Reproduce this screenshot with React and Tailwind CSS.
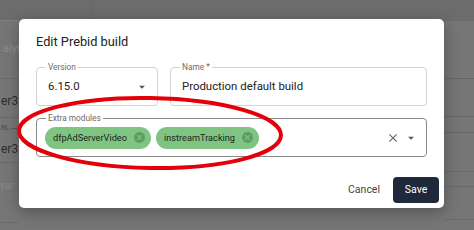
import React from 'react';

const ArrowDrop = ({ className }) => (
  <svg viewBox="0 0 24 24" className={className} fill="currentColor">
    <path d="M7 10l5 5 5-5z" />
  </svg>
);

const ChipDelete = () => (
  <svg viewBox="0 0 24 24" className="w-[13px] h-[13px] text-[#5f9b62]" fill="currentColor">
    <path d="M12 2C6.47 2 2 6.47 2 12s4.47 10 10 10 10-4.47 10-10S17.53 2 12 2zm5 13.59L15.59 17 12 13.41 8.41 17 7 15.59 10.59 12 7 8.41 8.41 7 12 10.59 15.59 7 17 8.41 13.41 12 17 15.59z" />
  </svg>
);

const Chip = ({ label }) => (
  <div className="flex items-center h-[22px] rounded-full bg-[#80c483] pl-[8px] pr-[5px] gap-[6px]">
    <span className="text-[9.2px] text-[#1a261a] leading-none">{label}</span>
    <ChipDelete />
  </div>
);

const Field = ({ label, value, arrow, className }) => (
  <div className={`relative h-[39px] border border-[#d2d2d2] rounded-[4px] flex items-center pl-[11px] pr-[8px] ${className}`}>
    <span className="absolute -top-[6px] left-[9px] px-[2px] bg-white text-[8.3px] leading-[10px] text-[#6b6b6b]">{label}</span>
    <span className="flex-1 text-[11.4px] text-[#222]">{value}</span>
    {arrow && <ArrowDrop className="w-[14px] h-[14px] text-[#555]" />}
  </div>
);

export default function App() {
  return (
    <div className="relative w-[474px] h-[230px] overflow-hidden bg-[#767676] font-['Roboto','Liberation_Sans',sans-serif]">
      {/* page behind the modal */}
      <div className="flex h-full">
        <div className="w-[19px] flex flex-col overflow-hidden">
          <div className="h-[21px] bg-[#6c6c6c] border-b border-[#7e7e7e]" />
          <div className="h-[58px] border-b border-[#6a6a6a] flex items-center text-[11px] text-[#8f8f8f] pl-[3px]">alyt</div>
          <div className="h-[39px] border-b border-[#6a6a6a] flex items-center text-[12px] text-[#2e2e2e] pl-[1px] pt-[6px]">er3</div>
          <div className="h-[45px] border-b border-[#6a6a6a] flex flex-col pl-[1px]">
            <div className="flex items-center gap-[2px] mt-[5px] text-[7px] text-[#4a4a4a]">RL<div className="flex-1 h-px bg-[#5a5a5a]" /></div>
            <div className="text-[12px] text-[#2e2e2e] mt-[6px]">er3</div>
          </div>
          <div className="h-[60px] border-b border-[#6a6a6a] flex items-center text-[10px] text-[#8a8a8a] pb-[14px]">var</div>
        </div>
        <div className="flex-1 flex flex-col">
          <div className="h-[21px] bg-[#6c6c6c] flex">
            <div className="w-[73px] border-r border-[#666]" />
          </div>
          <div className="h-[58px] border-b border-[#6a6a6a]" />
        </div>
        <div className="w-[30px] flex flex-col">
          <div className="h-[21px] bg-[#6c6c6c]" />
          <div className="h-[58px] border-b border-[#666]" />
          <div className="h-[38px] border-b border-[#666]" />
          <div className="h-[16px] border-b border-[#666]" />
          <div className="h-[39px] border-b border-[#6a6a6a]" />
          <div className="h-[15px] border-b border-[#6a6a6a]" />
          <div className="h-[33px] border-b border-[#6a6a6a]" />
        </div>
      </div>

      {/* modal */}
      <div className="absolute inset-0 pt-[19px] pl-[19px]">
        <div className="w-[425px] h-[189px] bg-white rounded-[5px] shadow-[0_4px_16px_rgba(0,0,0,0.3)] px-[17px] pt-[14px] flex flex-col">
          <h2 className="text-[12.8px] leading-[18px] text-[#222]">Edit Prebid build</h2>
          <div className="flex gap-[12px] mt-[16px]">
            <Field label="Version" value="6.15.0" arrow className="w-[122px]" />
            <Field label="Name *" value="Production default build" className="flex-1" />
          </div>
          <div className="relative mt-[12px] h-[39px] border border-[#8a8a8a] rounded-[4px] flex items-center pl-[8px] pr-[8px]">
            <span className="absolute -top-[6px] left-[9px] px-[2px] bg-white text-[8.3px] leading-[10px] text-[#6b6b6b]">Extra modules</span>
            <div className="flex-1 flex gap-[5px]">
              <Chip label="dfpAdServerVideo" />
              <Chip label="instreamTracking" />
            </div>
            <svg viewBox="0 0 24 24" className="w-[14px] h-[14px] text-[#666]" fill="currentColor">
              <path d="M19 6.41 17.59 5 12 10.59 6.41 5 5 6.41 10.59 12 5 17.59 6.41 19 12 13.41 17.59 19 19 17.59 13.41 12z" />
            </svg>
            <ArrowDrop className="ml-[4px] w-[14px] h-[14px] text-[#555]" />
          </div>
          <div className="mt-auto mb-[5px] -mr-[12px] flex justify-end items-center gap-[6px]">
            <button className="px-[7px] h-[26px] text-[10.5px] text-[#444]">Cancel</button>
            <button className="w-[46px] h-[26px] rounded-[4px] bg-[#1e293b] text-white text-[10.5px]">Save</button>
          </div>
        </div>
      </div>

      {/* red annotation */}
      <svg className="absolute inset-0 pointer-events-none" width="474" height="230" viewBox="0 0 474 230">
        <ellipse cx="150" cy="133" rx="131" ry="35" fill="none" stroke="#e3000b" strokeWidth="4" transform="rotate(1 150 133)" />
      </svg>
    </div>
  );
}
